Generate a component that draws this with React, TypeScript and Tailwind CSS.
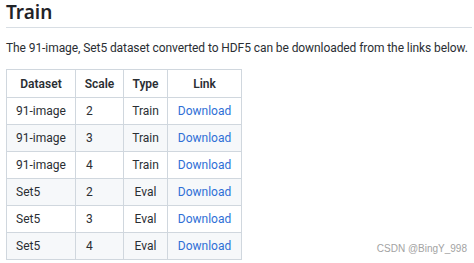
const ROWS = [
  { dataset: "91-image", scale: "2", type: "Train" },
  { dataset: "91-image", scale: "3", type: "Train" },
  { dataset: "91-image", scale: "4", type: "Train" },
  { dataset: "Set5", scale: "2", type: "Eval" },
  { dataset: "Set5", scale: "3", type: "Eval" },
  { dataset: "Set5", scale: "4", type: "Eval" },
];

export default function App() {
  return (
    <div
      className="relative h-[263px] w-[474px] overflow-hidden bg-white pl-[6px] pr-[2px] text-[#2a2e33]"
      style={{ fontFamily: 'Roboto, "Noto Sans", sans-serif' }}
    >
      {/* 标题 */}
      <h2
        className="h-[28px] border-b border-[#d8dee4] text-[19px] leading-[24px] font-semibold whitespace-nowrap text-[#1f2328]"
        style={{ fontFamily: '"Noto Sans", sans-serif' }}
      >
        Train
      </h2>

      <p className="mt-[10px] text-[12px] leading-[20px] tracking-[-0.08px] whitespace-nowrap">
        The 91-image, Set5 dataset converted to HDF5 can be downloaded from the links below.
      </p>

      <table className="mt-[11px] w-[236px] table-fixed border-collapse whitespace-nowrap text-[12px] leading-[18px]">
        <thead>
          <tr className="h-[28px]">
            <th className="w-[69px] border border-[#d0d7de] p-0 text-center font-semibold">Dataset</th>
            <th className="w-[48px] border border-[#d0d7de] p-0 text-center font-semibold">Scale</th>
            <th className="w-[44px] border border-[#d0d7de] p-0 text-center font-semibold">Type</th>
            <th className="w-[74px] border border-[#d0d7de] p-0 text-center font-semibold">Link</th>
          </tr>
        </thead>
        <tbody>
          {ROWS.map((r, i) => (
            <tr key={i} className={`h-[27px] ${i % 2 === 1 ? "bg-[#f6f8fa]" : "bg-white"}`}>
              <td className="border border-[#d0d7de] p-0 pl-[9px] text-left">{r.dataset}</td>
              <td className="border border-[#d0d7de] p-0 pl-[10px] text-left">{r.scale}</td>
              <td className="border border-[#d0d7de] p-0 text-center">{r.type}</td>
              <td className="border border-[#d0d7de] p-0 text-center text-[#2f6fd6]">Download</td>
            </tr>
          ))}
        </tbody>
      </table>

      {/* 水印 */}
      <div
        className="absolute bottom-[8px] right-[7px] text-[10px] leading-[12px] text-[#a3a3a3]"
        style={{ fontFamily: '"Liberation Sans", Arial, sans-serif' }}
      >
        CSDN @BingY_998
      </div>
    </div>
  );
}
